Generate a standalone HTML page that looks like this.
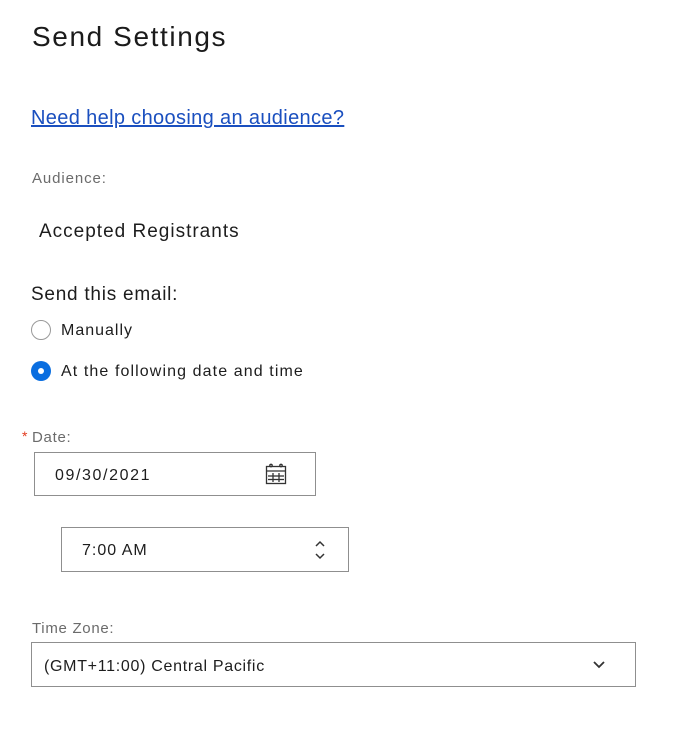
<!DOCTYPE html>
<html><head><meta charset="utf-8"><style>
*{margin:0;padding:0;box-sizing:border-box}
body{width:682px;height:742px;background:#fff;font-family:"Liberation Sans",sans-serif;color:#1d1d1d;position:relative;overflow:hidden}
.a{position:absolute;white-space:nowrap}
.box{position:absolute;border:1px solid #8f8f8f;background:#fff}
</style></head><body>
<div class="a" style="left:32px;top:21px;font-size:28px;color:#1b1b1b;letter-spacing:1.6px">Send Settings</div>
<div class="a" style="left:31px;top:107px;font-size:20px;color:#1a4fbf;text-decoration:underline;letter-spacing:0.35px">Need help choosing an audience?</div>
<div class="a" style="left:32px;top:170px;font-size:15px;color:#6b6b6b;letter-spacing:0.9px">Audience:</div>
<div class="a" style="left:39px;top:221px;font-size:19px;letter-spacing:1px">Accepted Registrants</div>
<div class="a" style="left:31px;top:284px;font-size:19px;letter-spacing:0.75px">Send this email:</div>
<div class="a" style="left:31px;top:320px;width:20px;height:20px;border:1px solid #999;border-radius:50%"></div>
<div class="a" style="left:61px;top:322px;font-size:16px;letter-spacing:1px">Manually</div>
<div class="a" style="left:31px;top:361px;width:20px;height:20px;border-radius:50%;background:#0a6ee0"></div>
<div class="a" style="left:38px;top:368px;width:6px;height:6px;border-radius:50%;background:#fff"></div>
<div class="a" style="left:61px;top:363px;font-size:16px;letter-spacing:1.1px">At the following date and time</div>
<div class="a" style="left:22px;top:428px;font-size:14px;color:#e23a1e">*</div>
<div class="a" style="left:32px;top:429px;font-size:15px;color:#6b6b6b;letter-spacing:0.7px">Date:</div>
<div class="box" style="left:34px;top:452px;width:282px;height:44px"></div>
<div class="a" style="left:55px;top:467px;font-size:16px;letter-spacing:1.6px">09/30/2021</div>
<svg class="a" style="left:265px;top:463px" width="22" height="22" viewBox="0 0 22 22" fill="none" stroke="#333" stroke-width="1.3"><rect x="1.5" y="3.5" width="19" height="17"/><line x1="1.5" y1="8" x2="20.5" y2="8"/><line x1="8" y1="10" x2="8" y2="19"/><line x1="14" y1="10" x2="14" y2="19"/><line x1="3" y1="13" x2="19" y2="13"/><line x1="3" y1="16.5" x2="19" y2="16.5"/><circle cx="6" cy="2.5" r="1.2"/><circle cx="16" cy="2.5" r="1.2"/></svg>
<div class="box" style="left:61px;top:527px;width:288px;height:45px"></div>
<div class="a" style="left:82px;top:542px;font-size:16px;letter-spacing:1px">7:00 AM</div>
<svg class="a" style="left:313px;top:539px" width="14" height="22" viewBox="0 0 14 22" fill="none" stroke="#333" stroke-width="1.5"><polyline points="3,7 7,3 11,7"/><polyline points="3,15 7,19 11,15"/></svg>
<div class="a" style="left:32px;top:620px;font-size:15px;color:#6b6b6b;letter-spacing:0.7px">Time Zone:</div>
<div class="box" style="left:31px;top:642px;width:605px;height:45px"></div>
<div class="a" style="left:44px;top:658px;font-size:16px;letter-spacing:0.7px">(GMT+11:00) Central Pacific</div>
<svg class="a" style="left:592px;top:660px" width="14" height="10" viewBox="0 0 14 10" fill="none" stroke="#333" stroke-width="1.8"><polyline points="2,2 7,7 12,2"/></svg>
</body></html>
